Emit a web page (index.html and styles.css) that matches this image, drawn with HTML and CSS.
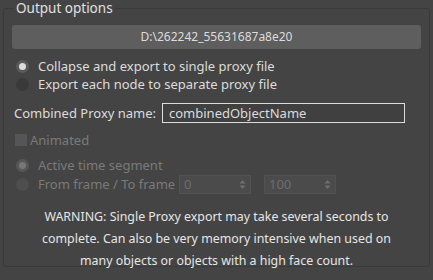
FILE: index.html
```html
<!DOCTYPE html>
<html>
<head>
<meta charset="utf-8">
<link rel="stylesheet" href="styles.css">
</head>
<body>
<div class="panel">
  <fieldset class="group">
    <legend class="title">Output options</legend>
    <div class="pathbtn">D:\262242_55631687a8e20</div>
    <div class="radios">
      <div class="row"><span class="radio on"></span><span>Collapse and export to single proxy file</span></div>
      <div class="row"><span class="radio"></span><span>Export each node to separate proxy file</span></div>
    </div>
    <div class="namerow">
      <span class="namelabel">Combined Proxy name:</span>
      <div class="nameinput">combinedObjectName</div>
    </div>
    <div class="row dis checkrow"><span class="check"></span><span>Animated</span></div>
    <div class="radios dis timegroup">
      <div class="row"><span class="radio on"></span><span>Active time segment</span></div>
      <div class="row framerow">
        <span class="radio"></span><span class="framelabel">From frame / To frame</span>
        <div class="spin first"><span>0</span><svg width="7" height="11" viewBox="0 0 7 11"><path d="M0.5 4.5 L3.5 1 L6.5 4.5 Z M0.5 6.5 L3.5 10 L6.5 6.5 Z" fill="#6e6e6e"/></svg></div>
        <div class="spin"><span>100</span><svg width="7" height="11" viewBox="0 0 7 11"><path d="M0.5 4.5 L3.5 1 L6.5 4.5 Z M0.5 6.5 L3.5 10 L6.5 6.5 Z" fill="#6e6e6e"/></svg></div>
      </div>
    </div>
    <p class="warning">WARNING: Single Proxy export may take several seconds to complete. Can also be very memory intensive when used on many objects or objects with a high face count.</p>
  </fieldset>
</div>
</body>
</html>
```
FILE: styles.css
```css
html, body {
  margin: 0;
  padding: 0;
  background: #444444;
  width: 433px;
  height: 280px;
  overflow: hidden;
}
body {
  font-family: "Noto Sans", "Open Sans", sans-serif;
  font-size: 13px;
  color: #dcdcdc;
}
.panel {
  padding: 0 3px 0 3px;
}
.group {
  margin: 0;
  border: 1px solid #3a3a3a;
  border-radius: 3px;
  padding: 0 8px 0 8px;
  height: 267px;
  box-sizing: border-box;
}
.title {
  padding: 0 2px;
  margin-left: 2px;
  line-height: 16px;
  height: 16px;
  font-size: 13.5px;
  color: #e0e0e0;
}
.pathbtn {
  margin-top: 9px;
  height: 24px;
  line-height: 24px;
  background: #5e5e5e;
  border-radius: 3px;
  text-align: center;
  color: #dcdcdc;
  font-size: 12px;
}
.radios {
  margin-top: 10px;
  display: flex;
  flex-direction: column;
  gap: 4px;
}
.row {
  display: flex;
  align-items: center;
  gap: 9px;
  height: 14px;
  white-space: nowrap;
}
.radio {
  width: 13px;
  height: 13px;
  border-radius: 50%;
  background: #3a3a3a;
  box-sizing: border-box;
  flex: none;
  margin-left: 4px;
}
.radio.on {
  background: #5a5a5a;
  position: relative;
}
.radio.on::after {
  content: "";
  position: absolute;
  left: 3px;
  top: 3px;
  width: 7px;
  height: 7px;
  border-radius: 50%;
  background: #dcdcdc;
}
.namerow {
  margin-top: 12px;
  display: flex;
  align-items: center;
  height: 20px;
}
.namelabel {
  width: 148px;
  padding-left: 2px;
  flex: none;
  white-space: nowrap;
}
.nameinput {
  width: 243px;
  height: 20px;
  box-sizing: border-box;
  border: 1px solid #dcdcdc;
  background: #404040;
  padding-left: 6px;
  line-height: 18px;
}
.dis { color: #7a7a7a; }
.checkrow {
  margin-top: 10px;
  gap: 3px;
}
.check {
  width: 12px;
  height: 12px;
  background: #555555;
  margin-left: 3px;
  flex: none;
}
.timegroup {
  margin-top: 11px;
  gap: 5px;
}
.dis .radio { background: #4e4e4e; }
.dis .radio.on { background: #575757; }
.dis .radio.on::after { background: #777777; }
.framelabel { width: 132px; flex: none; }
.spin {
  width: 72px;
  height: 19px;
  box-sizing: border-box;
  border: 1px solid #525252;
  background: #4b4b4b;
  display: flex;
  align-items: center;
  justify-content: space-between;
  padding: 0 4px 0 4px;
  color: #6e6e6e;
  flex: none;
}
.spin.first { margin-right: 4px; }
.warning {
  margin: 15px 0 0 0;
  text-align: center;
  line-height: 22px;
  padding: 0 28px;
  font-size: 12.4px;
  color: #e6e6e6;
}
```
